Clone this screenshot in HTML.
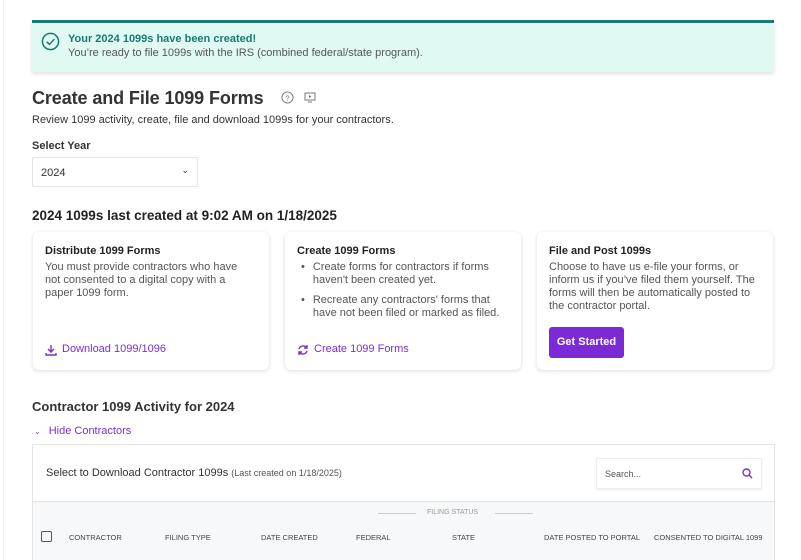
<!DOCTYPE html>
<html><head><style>
*{box-sizing:border-box;margin:0;padding:0}
html,body{width:801px;height:560px;overflow:hidden}
body{background:#fff;font-family:"Liberation Sans",Arial,sans-serif;color:#222;position:relative}
.abs{position:absolute}
.vline{left:3px;top:0;width:1px;height:560px;background:#eee}
.banner{left:32px;top:20px;width:742px;height:52px;background:#e0faf3;border-top:3px solid #1a7a73;box-shadow:0 2px 4px rgba(0,0,0,.12)}
.card{background:#fff;border-radius:6px;box-shadow:0 1px 4px rgba(0,0,0,.15);padding:13px 12px;font-size:11px;line-height:13px;color:#555}
.card h4{font-size:11px;color:#222;margin-bottom:3px}
.link{color:#7b2fd0;font-size:11px;display:flex;align-items:center;gap:5px}
.th{font-size:7.5px;color:#444;top:533px}
</style></head><body>
<div class="abs vline"></div>
<div class="abs banner">
<svg class="abs" style="left:9px;top:9px" width="19" height="19" viewBox="0 0 20 20"><circle cx="10" cy="10" r="8.5" fill="none" stroke="#1a7a73" stroke-width="1.6"/><path d="M6 10.3l2.8 2.7 5.3-5.5" fill="none" stroke="#1a7a73" stroke-width="1.6"/></svg>
<div class="abs" style="left:36px;top:10px;font-size:11px;font-weight:bold;color:#1a7a73">Your 2024 1099s have been created!</div>
<div class="abs" style="left:36px;top:24px;font-size:11px;color:#555">You’re ready to file 1099s with the IRS (combined federal/state program).</div>
</div>
<div class="abs" style="left:32px;top:88px;font-size:18px;font-weight:bold;color:#333;letter-spacing:-0.1px">Create and File 1099 Forms</div>
<svg class="abs" style="left:281px;top:91px" width="13" height="13" viewBox="0 0 14 14"><circle cx="7" cy="7" r="6" fill="none" stroke="#777" stroke-width="1"/><text x="7" y="10" font-size="8" text-anchor="middle" fill="#777" font-family="Liberation Sans">?</text></svg>
<svg class="abs" style="left:304px;top:92px" width="12" height="11" viewBox="0 0 12 11"><rect x="1" y="1" width="10" height="7" fill="none" stroke="#777"/><path d="M5 3v3l2.5-1.5z" fill="#777"/><path d="M4 10h4" stroke="#777"/></svg>
<div class="abs" style="left:32px;top:114px;font-size:11px;color:#333">Review 1099 activity, create, file and download 1099s for your contractors.</div>
<div class="abs" style="left:32px;top:140px;font-size:11px;font-weight:bold;color:#333">Select Year</div>
<div class="abs" style="left:32px;top:157px;width:166px;height:30px;border:1px solid #e5e5e5;border-radius:2px;font-size:11px;padding:9px 8px;color:#333">2024<span class="abs" style="right:8px;top:7px;font-size:9px">&#8964;</span></div>
<div class="abs" style="left:32px;top:208px;font-size:13.5px;font-weight:bold;color:#222">2024 1099s last created at 9:02 AM on 1/18/2025</div>

<div class="abs card" style="left:33px;top:232px;width:236px;height:138px">
<h4>Distribute 1099 Forms</h4>
<div style="padding-right:18px">You must provide contractors who have not consented to a digital copy with a paper 1099 form.</div>
<div class="abs link" style="left:12px;top:111px"><svg width="12" height="12" viewBox="0 0 12 12"><path d="M6 1v7M3 5l3 3 3-3M1 9v2h10V9" fill="none" stroke="#7b2fd0" stroke-width="1.4"/></svg>Download 1099/1096</div>
</div>
<div class="abs card" style="left:285px;top:232px;width:236px;height:138px">
<h4>Create 1099 Forms</h4>
<div style="display:flex;gap:8px;padding-left:4px;padding-right:14px"><span>•</span><span>Create forms for contractors if forms haven't been created yet.</span></div>
<div style="display:flex;gap:8px;padding-left:4px;margin-top:7px"><span>•</span><span>Recreate any contractors' forms that have not been filed or marked as filed.</span></div>
<div class="abs link" style="left:12px;top:111px"><svg width="12" height="12" viewBox="0 0 12 12"><path d="M10 4A4.5 4.5 0 0 0 2 5M2 8a4.5 4.5 0 0 0 8-1M10 1v3H7M2 11V8h3" fill="none" stroke="#7b2fd0" stroke-width="1.4"/></svg>Create 1099 Forms</div>
</div>
<div class="abs card" style="left:537px;top:232px;width:236px;height:138px">
<h4>File and Post 1099s</h4>
<div>Choose to have us e-file your forms, or inform us if you’ve filed them yourself. The forms will then be automatically posted to the contractor portal.</div>
<div class="abs" style="left:12px;top:95px;width:75px;height:31px;background:#7b2ad6;border-radius:3px;color:#fff;font-size:11px;font-weight:bold;text-align:center;line-height:31px">Get Started</div>
</div>

<div class="abs" style="left:32px;top:399px;font-size:13px;font-weight:bold;color:#333">Contractor 1099 Activity for 2024</div>
<div class="abs" style="left:34px;top:425px;font-size:11px;color:#7b2fd0"><span style="font-size:8px;margin-right:8px">&#8964;</span>Hide Contractors</div>

<div class="abs" style="left:32px;top:444px;width:743px;height:116px;border:1px solid #e5e5e5;border-bottom:none;overflow:hidden">
<div class="abs" style="left:13px;top:22px;font-size:11px;color:#333">Select to Download Contractor 1099s <span style="font-size:9px;color:#555">(Last created on 1/18/2025)</span></div>
<div class="abs" style="left:563px;top:13px;width:166px;height:31px;border:1px solid #eee;box-shadow:0 1px 2px rgba(0,0,0,.08);font-size:9px;color:#555;padding:10px 8px">Search...
<svg class="abs" style="right:8px;top:9px" width="11" height="11" viewBox="0 0 11 11"><circle cx="4.5" cy="4.5" r="3.5" fill="none" stroke="#7b2fd0" stroke-width="1.4"/><path d="M7 7l3 3" stroke="#7b2fd0" stroke-width="1.5"/></svg></div>
<div class="abs" style="left:0;top:56px;width:741px;height:70px;background:#f6f8f9;border-top:1px solid #e3e3e3"></div>
</div>
<div class="abs" style="left:378px;top:513px;width:38px;height:1px;background:#ccc"></div>
<div class="abs" style="left:427px;top:509px;font-size:7px;color:#999">FILING STATUS</div>
<div class="abs" style="left:495px;top:513px;width:38px;height:1px;background:#ccc"></div>
<div class="abs" style="left:41px;top:531px;width:11px;height:11px;border:1px solid #555;border-radius:2px"></div>
<div class="abs th" style="left:69px">CONTRACTOR</div>
<div class="abs th" style="left:165px">FILING TYPE</div>
<div class="abs th" style="left:261px">DATE CREATED</div>
<div class="abs th" style="left:356px">FEDERAL</div>
<div class="abs th" style="left:452px">STATE</div>
<div class="abs th" style="left:544px">DATE POSTED TO PORTAL</div>
<div class="abs th" style="left:654px">CONSENTED TO DIGITAL 1099</div>
</body></html>
